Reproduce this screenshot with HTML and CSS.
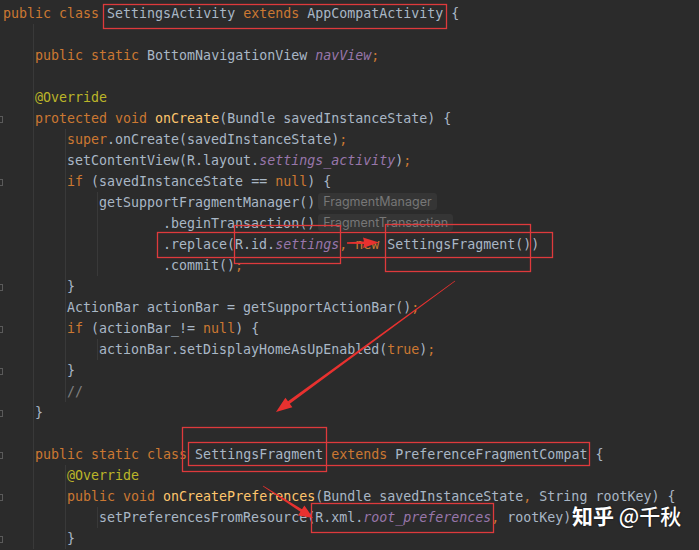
FILE: index.html
```html
<!DOCTYPE html>
<html lang="en">
<head>
    <meta charset="UTF-8">
    <meta name="viewport" content="width=device-width, initial-scale=1.0">
    <title>SettingsActivity.java</title>
    <link rel="stylesheet" href="styles.css">
</head>
<body>
    <div class="editor">
        <div class="code">
            <div class="line"><span class="gut"></span><span class="k">public class</span> SettingsActivity <span class="k">extends</span> AppCompatActivity {</div>
            <div class="line"><span class="gut"></span><i class="g"></i></div>
            <div class="line"><span class="gut"></span><i class="g"></i><span class="k">public static</span> BottomNavigationView <span class="f">navView</span><span class="k">;</span></div>
            <div class="line"><span class="gut"></span><i class="g"></i></div>
            <div class="line"><span class="gut"></span><i class="g"></i><span class="a">@Override</span></div>
            <div class="line fold"><span class="gut"></span><i class="g"></i><span class="k">protected void</span> <span class="m">onCreate</span>(Bundle savedInstanceState) {</div>
            <div class="line"><span class="gut"></span><i class="g"></i><i class="g"></i><span class="k">super</span>.onCreate(savedInstanceState)<span class="k">;</span></div>
            <div class="line"><span class="gut"></span><i class="g"></i><i class="g"></i>setContentView(R.layout.<span class="f">settings_activity</span>)<span class="k">;</span></div>
            <div class="line fold"><span class="gut"></span><i class="g"></i><i class="g"></i><span class="k">if</span> (savedInstanceState == <span class="k">null</span>) {</div>
            <div class="line"><span class="gut"></span><i class="g"></i><i class="g"></i><i class="g"></i>getSupportFragmentManager()<span class="hint">FragmentManager</span></div>
            <div class="line"><span class="gut"></span><i class="g"></i><i class="g"></i><i class="g"></i>        .beginTransaction()<span class="hint">FragmentTransaction</span></div>
            <div class="line"><span class="gut"></span><i class="g"></i><i class="g"></i><i class="g"></i>        .replace(R.id.<span class="f">settings</span><span class="k">,</span> <span class="k">new</span> SettingsFragment())</div>
            <div class="line"><span class="gut"></span><i class="g"></i><i class="g"></i><i class="g"></i>        .commit()<span class="k">;</span></div>
            <div class="line fold"><span class="gut"></span><i class="g"></i><i class="g"></i>}</div>
            <div class="line"><span class="gut"></span><i class="g"></i><i class="g"></i>ActionBar actionBar = getSupportActionBar()<span class="k">;</span></div>
            <div class="line fold"><span class="gut"></span><i class="g"></i><i class="g"></i><span class="k">if</span> (actionBar_!= <span class="k">null</span>) {</div>
            <div class="line"><span class="gut"></span><i class="g"></i><i class="g"></i><i class="g"></i>actionBar.setDisplayHomeAsUpEnabled(<span class="k">true</span>)<span class="k">;</span></div>
            <div class="line fold"><span class="gut"></span><i class="g"></i><i class="g"></i>}</div>
            <div class="line"><span class="gut"></span><i class="g"></i><i class="g"></i><span class="c">//</span></div>
            <div class="line fold"><span class="gut"></span><i class="g"></i>}</div>
            <div class="line"><span class="gut"></span><i class="g"></i></div>
            <div class="line fold"><span class="gut"></span><i class="g"></i><span class="k">public static class</span> SettingsFragment <span class="k">extends</span> PreferenceFragmentCompat {</div>
            <div class="line"><span class="gut"></span><i class="g"></i><i class="g"></i><span class="a">@Override</span></div>
            <div class="line fold"><span class="gut"></span><i class="g"></i><i class="g"></i><span class="k">public void</span> <span class="m">onCreatePreferences</span>(Bundle savedInstanceState<span class="k">,</span> String rootKey) {</div>
            <div class="line"><span class="gut"></span><i class="g"></i><i class="g"></i><i class="g"></i>setPreferencesFromResource(R.xml.<span class="f">root_preferences</span><span class="k">,</span> rootKey)<span class="k">;</span></div>
            <div class="line fold"><span class="gut"></span><i class="g"></i><i class="g"></i>}</div>
        </div>

        <!-- annotation overlay: red boxes and arrows -->
        <svg class="marks" width="699" height="550" viewBox="0 0 699 550">
            <g fill="none" stroke="#de3a3c" stroke-width="1.3">
                <rect x="103.5" y="4.5" width="343" height="24"/>
                <rect x="157.5" y="232.5" width="395" height="25"/>
                <rect x="234.5" y="225.5" width="106" height="38"/>
                <rect x="385.5" y="224.5" width="145" height="47"/>
                <rect x="182.5" y="427.5" width="144" height="44"/>
                <rect x="188.5" y="442.5" width="401" height="23"/>
                <rect x="311.5" y="503.5" width="182" height="29"/>
            </g>
            <g fill="#e8312f">
                <polygon points="347,242.2 364,241.5 363,237.5 379,242.5 363,248 364,244 347,243.8"/>
                <polygon points="455.2,281.3 289.8,403.7 292.4,407.3 276,412 285.4,397.7 288,401.3 454.8,280.7"/>
                <polygon points="262.8,486.3 300.4,511.8 298,515.6 313,518 304.4,505.4 302,509.2 263.2,485.7"/>
            </g>
        </svg>

        <div class="watermark"><b>知乎</b> @千秋</div>
    </div>
</body>
</html>
```

FILE: styles.css
```css
body {
    margin: 0;
    background-color: #2b2b2b;
    overflow: hidden;
}
.editor {
    position: relative;
    width: 699px;
    height: 550px;
    overflow: hidden;
    font-family: "DejaVu Sans Mono", monospace;
    font-size: 13.3px;
    color: #a9b7c6;
}
.code {
    padding-top: 3px;
}
.line {
    height: 21px;
    line-height: 21px;
    white-space: pre;
}
/* gutter with fold markers */
.gut {
    display: inline-block;
    width: 3px;
    height: 7px;
    box-sizing: border-box;
    vertical-align: middle;
}
.fold .gut {
    border: 1px solid #5a5a5a;
    border-left: none;
}
/* indent guides */
.g {
    display: inline-block;
    width: 32px;
    height: 21px;
    vertical-align: top;
    background: linear-gradient(#393939, #393939) 30px 0 / 1px 100% no-repeat;
}
.k { color: #cc7832; }
.f { color: #9876aa; font-style: italic; }
.a { color: #bbb529; }
.m { color: #ffc66d; }
.c { color: #808080; }
.hint {
    display: inline-block;
    margin-left: 3px;
    padding: 0 5px;
    font-family: Inter, "Noto Sans", sans-serif;
    font-size: 12.5px;
    line-height: 17px;
    color: #777777;
    background-color: #353535;
    border-radius: 3px;
    vertical-align: 1px;
}
.marks {
    position: absolute;
    top: 0;
    left: 0;
    pointer-events: none;
}
.watermark {
    position: absolute;
    left: 572px;
    top: 502px;
    font-family: "Noto Sans CJK SC", "Noto Sans", sans-serif;
    font-size: 21px;
    line-height: 26px;
    font-weight: 500;
    color: #ffffff;
    text-shadow: 0 0 2px rgba(0, 0, 0, 0.8);
    white-space: pre;
}
.watermark b {
    font-weight: 700;
}
```
